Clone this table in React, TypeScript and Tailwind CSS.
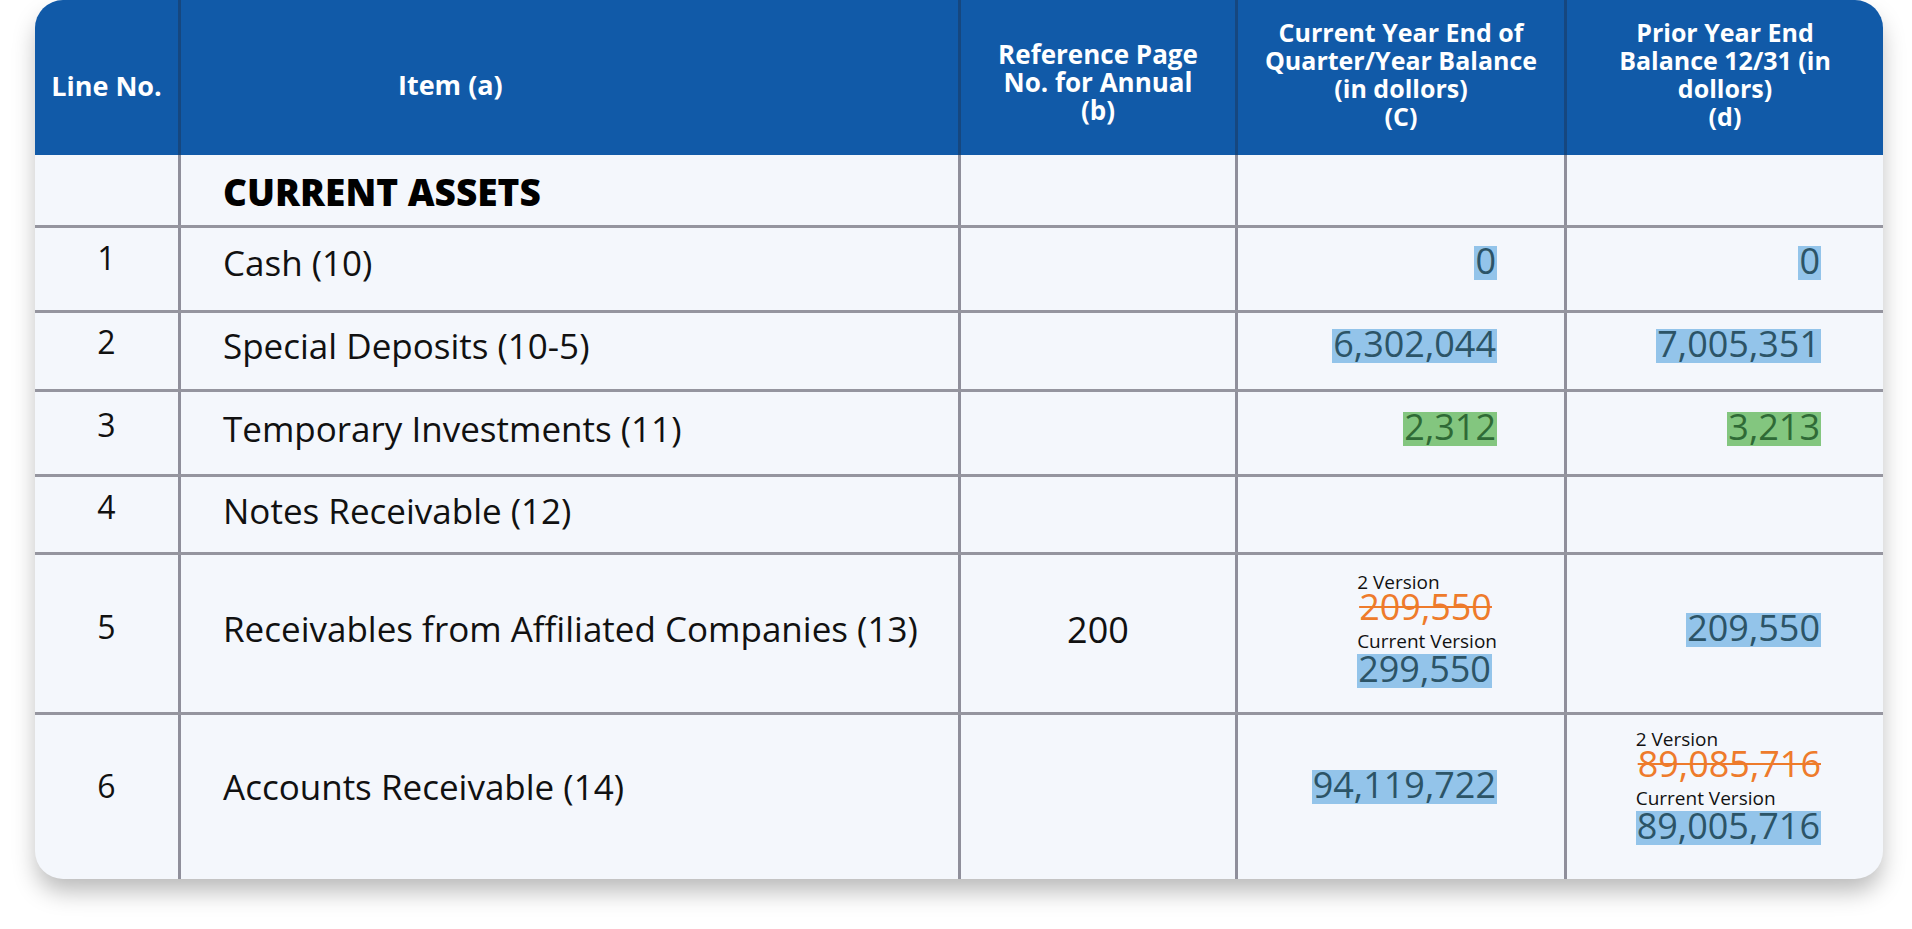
type Tone = 'blue' | 'green';

type Amount =
  | { kind: 'plain'; value: string; tone: Tone }
  | { kind: 'versioned'; old: string; value: string };

type Row = {
  no: string;
  item: string;
  ref?: string;
  c?: Amount;
  d?: Amount;
  h: string;
  pad: string;
  numPad: string;
  last?: boolean;
};

const rows: Row[] = [
  { no: '1', item: 'Cash (10)', c: { kind: 'plain', value: '0', tone: 'blue' }, d: { kind: 'plain', value: '0', tone: 'blue' }, h: 'h-[85px]', pad: 'pb-[12px]', numPad: 'pb-[22px]' },
  { no: '2', item: 'Special Deposits (10-5)', c: { kind: 'plain', value: '6,302,044', tone: 'blue' }, d: { kind: 'plain', value: '7,005,351', tone: 'blue' }, h: 'h-[79px]', pad: 'pb-[10px]', numPad: 'pb-[18px]' },
  { no: '3', item: 'Temporary Investments (11)', c: { kind: 'plain', value: '2,312', tone: 'green' }, d: { kind: 'plain', value: '3,213', tone: 'green' }, h: 'h-[85px]', pad: 'pb-[8px]', numPad: 'pb-[16px]' },
  { no: '4', item: 'Notes Receivable (12)', h: 'h-[78px]', pad: 'pb-[6px]', numPad: 'pb-[16px]' },
  { no: '5', item: 'Receivables from Affiliated Companies (13)', ref: '200', c: { kind: 'versioned', old: '209,550', value: '299,550' }, d: { kind: 'plain', value: '209,550', tone: 'blue' }, h: 'h-[160px]', pad: 'pb-[8px]', numPad: 'pb-[14px]' },
  { no: '6', item: 'Accounts Receivable (14)', c: { kind: 'plain', value: '94,119,722', tone: 'blue' }, d: { kind: 'versioned', old: '89,085,716', value: '89,005,716' }, h: 'h-[164px]', pad: 'pb-[20px]', numPad: 'pb-[22px]', last: true },
];

const Highlight = ({ value, tone }: { value: string; tone: Tone }) => (
  <span
    className={
      tone === 'green'
        ? 'inline-block h-[34px] px-[1px] bg-[#83c67f] text-[#2f6a36] text-[36px] leading-[30px]'
        : 'inline-block h-[34px] px-[1px] bg-[#93c4ea] text-[#2c5467] text-[36px] leading-[30px]'
    }
  >
    {value}
  </span>
);

const AmountCell = ({ amount }: { amount?: Amount }) => {
  if (!amount) return null;
  if (amount.kind === 'plain') return <Highlight value={amount.value} tone={amount.tone} />;
  return (
    <div className="flex flex-col items-start">
      <div className="h-[20px] text-[19px] leading-[20px] text-[#111]">2 Version</div>
      <div className="h-[30px] pl-[2px] text-[36px] leading-[30px] text-[#ee7b2b] line-through decoration-[2px]">
        {amount.old}
      </div>
      <div className="mt-[9px] h-[20px] text-[19px] leading-[20px] text-[#111]">Current Version</div>
      <div className="mt-[3px] h-[34px]">
        <Highlight value={amount.value} tone="blue" />
      </div>
    </div>
  );
};

const cellLine = 'border-r-[3px] border-[#8f8f9b]';
const headLine = 'border-r-[3px] border-[#16477f]';

export default function App() {
  return (
    <div className="w-[1912px] h-[929px] bg-white pl-[35px] font-['Open_Sans',sans-serif]">
      <div className="w-[1848px] h-[879px] rounded-[28px] overflow-hidden bg-[#f4f7fc] shadow-[0_14px_24px_-2px_rgba(0,0,0,0.28)]">
        {/* Header */}
        <div className="flex h-[155px] bg-[#115aa8] text-white font-bold text-[26px] leading-[28px] text-center">
          <div className={`w-[146px] flex items-center justify-center pt-[16px] text-[27px] ${headLine}`}>Line No.</div>
          <div className={`w-[780px] flex items-center pl-[217px] pt-[14px] text-[27px] ${headLine}`}>Item (a)</div>
          <div className={`w-[277px] flex items-center justify-center pt-[8px] ${headLine}`}>
            <span>
              Reference Page
              <br />
              No. for Annual
              <br />
              (b)
            </span>
          </div>
          <div className={`w-[329px] flex items-center justify-center pb-[8px] text-[25px] ${headLine}`}>
            <span>
              Current Year End of
              <br />
              Quarter/Year Balance
              <br />
              (in dollors)
              <br />
              (C)
            </span>
          </div>
          <div className="w-[316px] flex items-center justify-center pb-[8px] text-[25px]">
            <span>
              Prior Year End
              <br />
              Balance 12/31 (in
              <br />
              dollors)
              <br />
              (d)
            </span>
          </div>
        </div>

        {/* Section title */}
        <div className="flex h-[73px] border-b-[3px] border-[#95959f]">
          <div className={`w-[146px] ${cellLine}`} />
          <div className={`w-[780px] flex items-center pl-[42px] pt-[4px] text-[37px] font-extrabold text-black ${cellLine}`}>
            CURRENT ASSETS
          </div>
          <div className={`w-[277px] ${cellLine}`} />
          <div className={`w-[329px] ${cellLine}`} />
          <div className="w-[316px]" />
        </div>

        {/* Rows */}
        {rows.map((r) => (
          <div
            key={r.no}
            className={`flex ${r.h} ${r.last ? '' : 'border-b-[3px] border-[#95959f]'} text-[#111]`}
          >
            <div className={`w-[146px] flex items-center justify-center text-[32px] ${r.numPad} ${cellLine}`}>
              {r.no}
            </div>
            <div className={`w-[780px] flex items-center pl-[42px] text-[35px] ${r.pad} ${cellLine}`}>{r.item}</div>
            <div className={`w-[277px] flex items-center justify-center text-[36px] ${r.pad} ${cellLine}`}>{r.ref}</div>
            <div className={`w-[329px] flex items-center justify-end pr-[67px] ${r.pad} ${cellLine}`}>
              <AmountCell amount={r.c} />
            </div>
            <div className={`w-[316px] flex items-center justify-end pr-[62px] ${r.pad}`}>
              <AmountCell amount={r.d} />
            </div>
          </div>
        ))}
      </div>
    </div>
  );
}
